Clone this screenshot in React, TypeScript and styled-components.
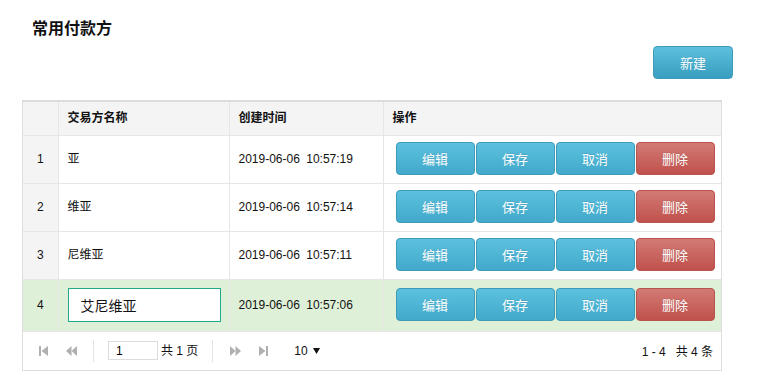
import React from "react";
import styled, { createGlobalStyle } from "styled-components";

const Global = createGlobalStyle`
  html, body { margin: 0; padding: 0; background: #fff; }
  body {
    font-family: "Liberation Sans", "Noto Sans CJK SC", sans-serif;
    font-size: 12px;
    color: #222;
  }
  * { box-sizing: border-box; }
`;

const Page = styled.div`
  padding: 14px 0 0 22px;
  width: 765px;
`;

const TopBar = styled.div`
  width: 711px;
  display: flex;
  flex-direction: column;
`;

const Title = styled.h1`
  margin: 0 0 0 10px;
  font-size: 16px;
  line-height: 30px;
  font-weight: bold;
  color: #111;
`;

const ActionRow = styled.div`
  display: flex;
  justify-content: flex-end;
  margin-top: 2px;
`;

const Button = styled.button<{ $variant?: "info" | "danger" }>`
  width: ${(p) => (p.$variant ? "79px" : "80px")};
  height: 33px;
  padding: 0;
  margin: 0;
  border-radius: 4px;
  font-family: "Liberation Sans", "Noto Sans CJK SC", sans-serif;
  font-size: 13px;
  color: #fff;
  cursor: pointer;
  border: 1px solid
    ${(p) => (p.$variant === "danger" ? "#b9534d" : "#3d9bb8")};
  background: ${(p) =>
    p.$variant === "danger"
      ? "linear-gradient(#d37a75, #c0514b)"
      : "linear-gradient(#5bc1de, #43a9cb)"};
  text-shadow: 0 -1px 0 rgba(0, 0, 0, 0.1);
`;

const NewButton = styled(Button)`
  background: linear-gradient(#5cc0dd, #399ebf);
`;

const TableBox = styled.div`
  margin-top: 21px;
  width: 700px;
  border: 1px solid #dedede;
  border-top: 2px solid #dcdcdc;
`;

const Table = styled.table`
  width: 100%;
  border-collapse: collapse;
  table-layout: fixed;
`;

const Col = styled.col<{ $w?: number }>`
  ${(p) => (p.$w ? `width: ${p.$w}px;` : "")}
`;

const Th = styled.th`
  height: 33px;
  background: #f4f4f4;
  border-right: 1px solid #e6e6e6;
  border-bottom: 1px solid #e6e6e6;
  text-align: left;
  font-weight: bold;
  font-size: 12px;
  line-height: 16px;
  padding: 0 9px;
  color: #111;
  &:last-child { border-right: none; }
`;

const Tr = styled.tr<{ $active?: boolean }>`
  background: ${(p) => (p.$active ? "#dff0d8" : "#fff")};
`;

const Td = styled.td<{ $h: number }>`
  height: ${(p) => p.$h}px;
  border-right: 1px solid #e6e6e6;
  border-bottom: 1px solid #e6e6e6;
  padding: 0 9px;
  font-size: 12px;
  line-height: 16px;
  vertical-align: middle;
  color: #111;
  &:last-child { border-right: none; }
`;

const IndexTd = styled(Td)<{ $active?: boolean }>`
  text-align: center;
  padding: 0;
  background: ${(p) => (p.$active ? "#dff0d8" : "#f4f4f4")};
`;

const TimeText = styled.span`
  word-spacing: 3px;
`;

const OpsTd = styled(Td)`
  padding: 0 0 2px 12px;
`;

const BtnGroup = styled.div`
  display: flex;
  gap: 1px;
`;

const NameInput = styled.input`
  width: 153px;
  height: 34px;
  border: 1px solid #1fa88a;
  padding: 0 12px;
  font-family: "Liberation Sans", "Noto Sans CJK SC", sans-serif;
  font-size: 14px;
  color: #111;
  outline: none;
  background: #fff;
  display: block;
`;

const Pager = styled.div`
  height: 38px;
  display: flex;
  align-items: center;
  padding: 0 8px 0 6px;
  color: #111;
`;

const PagerIcon = styled.span`
  width: 28px;
  display: flex;
  justify-content: center;
  align-items: center;
`;

const Sep = styled.span`
  width: 1px;
  height: 22px;
  background: #e3e3e3;
  margin: 0 8px;
`;

const PageInput = styled.input`
  width: 50px;
  height: 19px;
  border: 1px solid #dcdcdc;
  padding: 0 7px;
  font-family: "Liberation Sans", sans-serif;
  font-size: 12px;
  margin: 0 3px 0 6px;
  outline: none;
`;

const PagerText = styled.span`
  font-size: 12px;
  line-height: 16px;
  margin-right: 6px;
`;

const SizeSelect = styled.span`
  margin-left: 17px;
  font-size: 12px;
  display: flex;
  align-items: center;
  gap: 5px;
`;

const Spacer = styled.span`
  flex: 1;
`;

const Summary = styled.span`
  font-size: 12px;
  white-space: pre;
`;

const iconColor = "#b0b0b0";

const FirstIcon = () => (
  <svg width="9" height="10" viewBox="0 0 9 10">
    <rect x="0" y="0" width="2" height="10" fill={iconColor} />
    <path d="M9 0 L2.5 5 L9 10 Z" fill={iconColor} />
  </svg>
);
const PrevIcon = () => (
  <svg width="11" height="10" viewBox="0 0 11 10">
    <path d="M5.5 0 L0 5 L5.5 10 Z" fill={iconColor} />
    <path d="M11 0 L5.5 5 L11 10 Z" fill={iconColor} />
  </svg>
);
const NextIcon = () => (
  <svg width="11" height="10" viewBox="0 0 11 10">
    <path d="M0 0 L5.5 5 L0 10 Z" fill={iconColor} />
    <path d="M5.5 0 L11 5 L5.5 10 Z" fill={iconColor} />
  </svg>
);
const LastIcon = () => (
  <svg width="9" height="10" viewBox="0 0 9 10">
    <path d="M0 0 L6.5 5 L0 10 Z" fill={iconColor} />
    <rect x="7" y="0" width="2" height="10" fill={iconColor} />
  </svg>
);

const rows = [
  { id: 1, name: "亚", time: "2019-06-06 10:57:19" },
  { id: 2, name: "维亚", time: "2019-06-06 10:57:14" },
  { id: 3, name: "尼维亚", time: "2019-06-06 10:57:11" },
  { id: 4, name: "艾尼维亚", time: "2019-06-06 10:57:06", editing: true },
];

export default function App() {
  return (
    <>
      <Global />
      <Page>
        <TopBar>
          <Title>常用付款方</Title>
          <ActionRow>
            <NewButton>新建</NewButton>
          </ActionRow>
        </TopBar>
        <TableBox>
          <Table>
            <colgroup>
              <Col $w={35} />
              <Col $w={171} />
              <Col $w={154} />
              <Col />
            </colgroup>
            <thead>
              <tr>
                <Th></Th>
                <Th>交易方名称</Th>
                <Th>创建时间</Th>
                <Th>操作</Th>
              </tr>
            </thead>
            <tbody>
              {rows.map((r) => {
                const h = r.editing ? 52 : 48;
                return (
                  <Tr key={r.id} $active={r.editing}>
                    <IndexTd $h={h} $active={r.editing}>
                      {r.id}
                    </IndexTd>
                    <Td $h={h}>
                      {r.editing ? (
                        <NameInput defaultValue={r.name} />
                      ) : (
                        r.name
                      )}
                    </Td>
                    <Td $h={h}>
                      <TimeText>{r.time}</TimeText>
                    </Td>
                    <OpsTd $h={h}>
                      <BtnGroup>
                        <Button $variant="info">编辑</Button>
                        <Button $variant="info">保存</Button>
                        <Button $variant="info">取消</Button>
                        <Button $variant="danger">删除</Button>
                      </BtnGroup>
                    </OpsTd>
                  </Tr>
                );
              })}
            </tbody>
          </Table>
          <Pager>
            <PagerIcon>
              <FirstIcon />
            </PagerIcon>
            <PagerIcon>
              <PrevIcon />
            </PagerIcon>
            <Sep />
            <PageInput defaultValue="1" />
            <PagerText>共 1 页</PagerText>
            <Sep />
            <PagerIcon>
              <NextIcon />
            </PagerIcon>
            <PagerIcon>
              <LastIcon />
            </PagerIcon>
            <SizeSelect>
              10
              <svg width="7" height="6" viewBox="0 0 7 6">
                <path d="M0 0 L7 0 L3.5 6 Z" fill="#111" />
              </svg>
            </SizeSelect>
            <Spacer />
            <Summary>1 - 4   共 4 条</Summary>
          </Pager>
        </TableBox>
      </Page>
    </>
  );
}
